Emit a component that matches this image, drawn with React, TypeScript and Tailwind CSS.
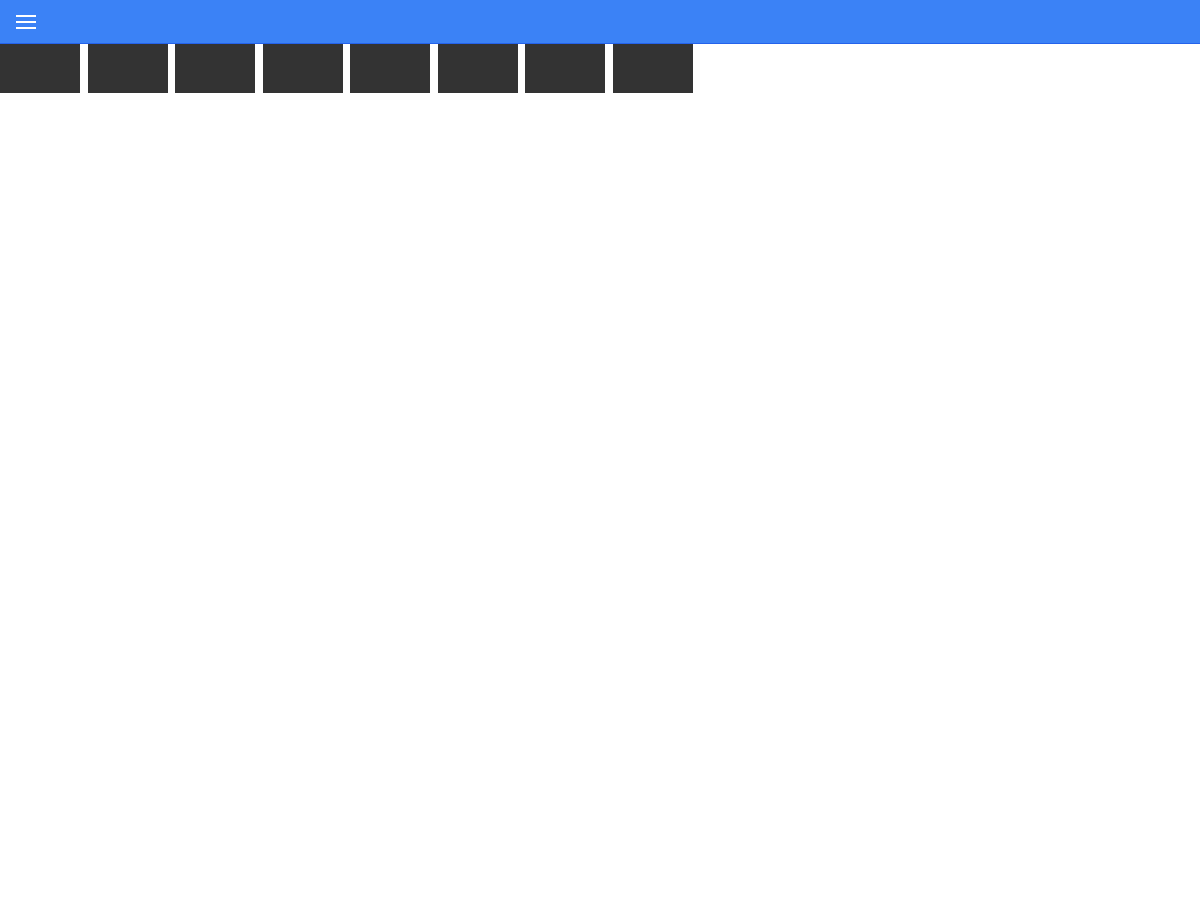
export default function App() {
  const tiles = Array.from({ length: 8 });

  return (
    <div className="min-h-screen bg-white font-['Roboto',sans-serif]">
      <header className="h-11 bg-[#3b82f6] border-b border-[#2563eb] flex items-center px-4">
        <button type="button" aria-label="Menu" className="flex flex-col gap-1 w-5">
          <span className="block h-0.5 w-5 bg-white" />
          <span className="block h-0.5 w-5 bg-white" />
          <span className="block h-0.5 w-5 bg-white" />
        </button>
      </header>
      <div className="flex gap-[7.5px]">
        {tiles.map((_, i) => (
          <div key={i} className="w-20 h-[49px] bg-[#333333]" />
        ))}
      </div>
    </div>
  );
}
